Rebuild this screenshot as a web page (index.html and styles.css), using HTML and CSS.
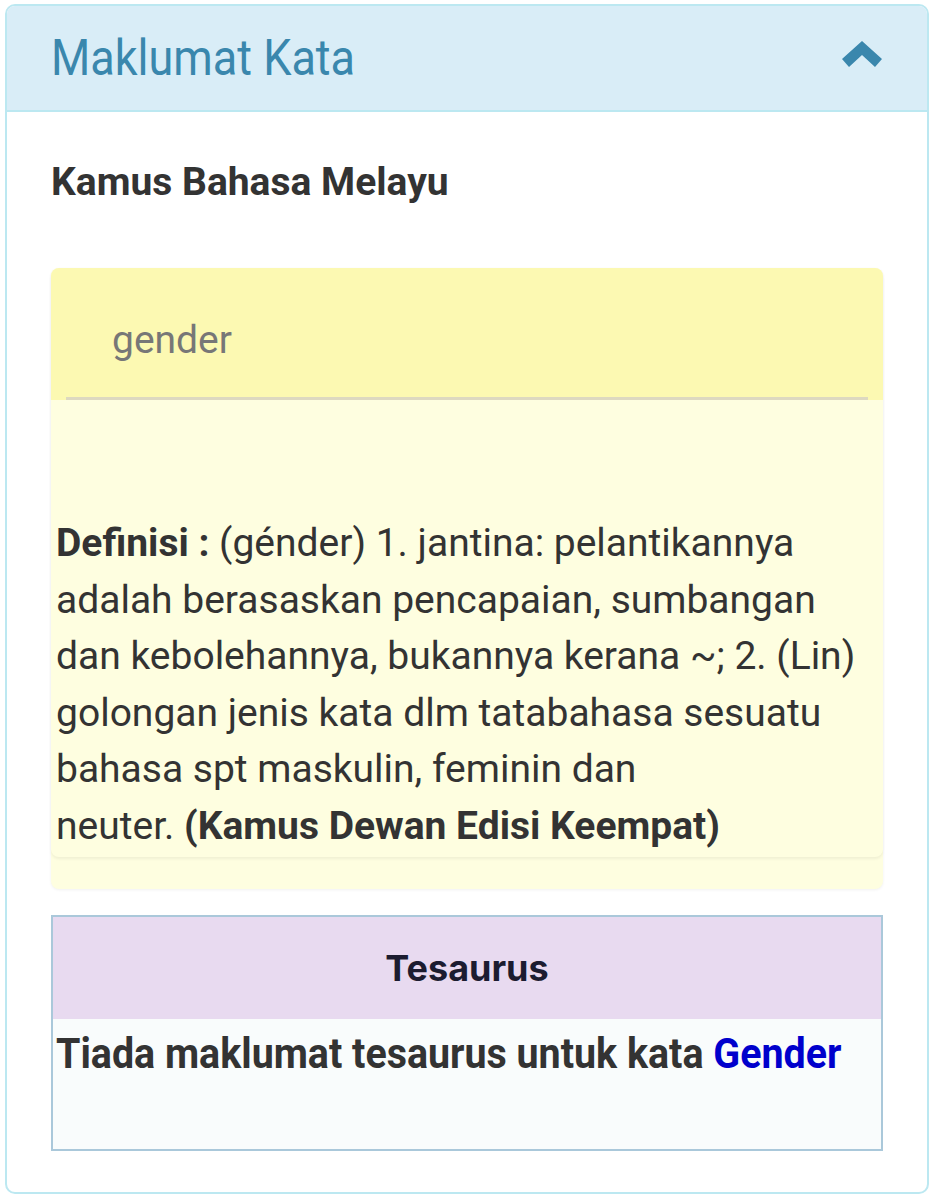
FILE: index.html
```html
<!DOCTYPE html>
<html>
<head>
<meta charset="utf-8">
<link rel="stylesheet" href="styles.css">
</head>
<body>
<div class="panel">
  <div class="panel-heading">
    <h2 class="panel-title">Maklumat Kata</h2>
    <svg class="chevron" width="40" height="28" viewBox="0 0 40 28"><path d="M0 18 L20 0 L40 18 L33 26 L20 14 L7 26 Z" fill="#3a87ad"/></svg>
  </div>
  <div class="panel-body">
    <h3 class="section-title">Kamus Bahasa Melayu</h3>
    <div class="entry">
      <div class="entry-inner">
        <div class="word-field"><span class="word">gender</span></div>
        <div class="definition">
          <p><b>Definisi :</b> (génder) 1. jantina: pelantikannya adalah berasaskan pencapaian, sumbangan dan kebolehannya, bukannya kerana ~; 2. (Lin) golongan jenis kata dlm tatabahasa sesuatu bahasa spt maskulin, feminin dan <span class="source">neuter. <b>(Kamus Dewan Edisi Keempat)</b></span></p>
        </div>
      </div>
    </div>
    <div class="thesaurus">
      <div class="thesaurus-head">Tesaurus</div>
      <div class="thesaurus-body"><span class="none">Tiada maklumat tesaurus untuk kata <a class="link">Gender</a></span></div>
    </div>
  </div>
</div>
</body>
</html>
```

FILE: styles.css
```css
* { box-sizing: border-box; }
html, body { margin: 0; background: #fff; }
body { padding: 4px 5px 6px; font-family: Roboto, "Noto Sans", sans-serif; color: #333; }
.panel {
  border: 2px solid #bce8f1;
  border-radius: 10px;
  overflow: hidden;
  height: 1190px;
}
.panel-heading {
  background: #d9edf7;
  border-bottom: 2px solid #bce8f1;
  height: 106px;
  display: flex;
  align-items: center;
  justify-content: space-between;
  padding: 0 45px 0 44px;
}
.panel-title {
  margin: 0;
  font-weight: 400;
  font-size: 50px;
  color: #3a87ad;
  transform: scaleX(0.9);
  transform-origin: left center;
  white-space: nowrap;
}
.chevron { display: block; margin-top: -6px; }
.panel-body { padding: 44px 44px 0 44px; }
.section-title {
  margin: 0 0 60px;
  font-size: 39px;
  font-weight: 700;
  line-height: 52px;
}
.entry {
  background: #fefee0;
  border-radius: 8px;
  box-shadow: 0 1px 3px rgba(0,0,0,0.06);
  padding-bottom: 32px;
}
.entry-inner {
  border-radius: 8px;
  box-shadow: 0 2px 3px rgba(0,0,0,0.06);
  padding-bottom: 3px;
}
.word-field {
  background: #fcf9b2;
  height: 132px;
  padding: 0 15px;
  display: flex;
  border-radius: 8px 8px 0 0;
}
.word {
  flex: 1;
  border-bottom: 3px solid #ddd9c0;
  padding: 49px 0 0 46px;
  font-size: 39px;
  color: #777;
}
.definition { padding: 115px 5px 0; }
.definition p {
  margin: 0;
  font-size: 39px;
  line-height: 56.5px;
}
.source { white-space: nowrap; }
.thesaurus {
  margin-top: 26px;
  border: 2px solid #aac8da;
}
.thesaurus-head {
  background: #e8daf0;
  height: 102px;
  display: flex;
  align-items: center;
  justify-content: center;
  font-family: Inter, "Liberation Sans", sans-serif;
  font-weight: 700;
  font-size: 36px;
  color: #1c1c30;
}
.thesaurus-body {
  background: #f9fcfc;
  height: 130px;
  padding: 10px 3px 0;
}
.none {
  display: inline-block;
  font-size: 42px;
  font-weight: 700;
  color: #333;
  transform: scaleX(0.938);
  transform-origin: left center;
  white-space: nowrap;
}
.link { color: #0000cc; }
```
